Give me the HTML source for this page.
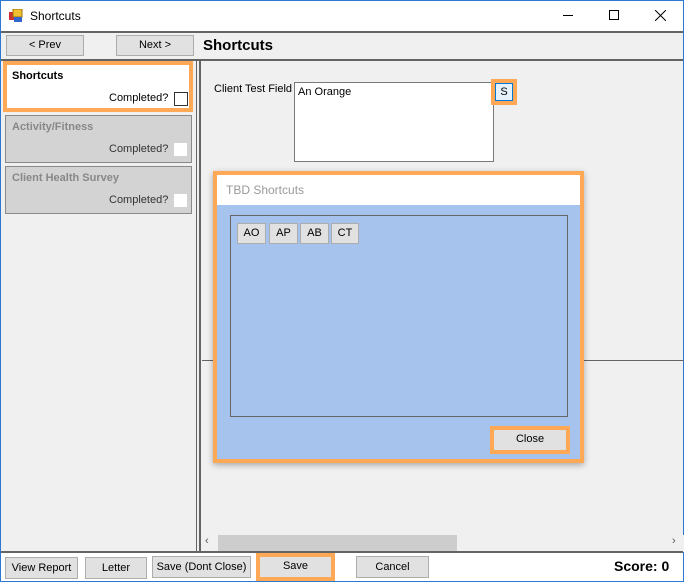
<!DOCTYPE html>
<html><head><style>
*{box-sizing:border-box;margin:0;padding:0}
html,body{width:684px;height:582px;overflow:hidden}
body{background:#f0f0f0;font-family:"Liberation Sans",sans-serif;font-size:11px;color:#000;position:relative;white-space:nowrap}
div,span{position:absolute}
.btn{background:#e1e1e1;border:1px solid #adadad;text-align:center;font-size:11px}
.org{border:4px solid #ffa856}
</style></head><body>
<div style="left:0;top:0;width:684px;height:582px;border:1px solid #2b79d0"></div>
<div style="left:1px;top:1px;width:682px;height:30px;background:#fff"></div>
<svg style="position:absolute;left:9px;top:9px" width="14" height="14"><rect x="0" y="3" width="5" height="8" fill="#c33"/><rect x="4" y="0" width="9" height="8" fill="#f0c030" stroke="#a07000"/><rect x="5" y="8" width="8" height="5" fill="#36c"/></svg>
<span style="left:30px;top:9px;font-size:12px">Shortcuts</span>
<div style="left:563px;top:15px;width:10px;height:1px;background:#000"></div>
<div style="left:609px;top:10px;width:10px;height:10px;border:1px solid #000"></div>
<svg style="position:absolute;left:655px;top:10px" width="11" height="11"><path d="M0 0L11 11M11 0L0 11" stroke="#000"/></svg>
<div style="left:1px;top:31px;width:682px;height:2px;background:#646464"></div>
<div class="btn" style="left:6px;top:35px;width:78px;height:21px;line-height:19px">&lt; Prev</div>
<div class="btn" style="left:116px;top:35px;width:78px;height:21px;line-height:19px">Next &gt;</div>
<span style="left:203px;top:37px;font-size:15px;font-weight:bold">Shortcuts</span>
<div style="left:1px;top:59px;width:682px;height:2px;background:#646464"></div>
<div style="left:196px;top:61px;width:1px;height:491px;background:#646464"></div>
<div style="left:199px;top:61px;width:2px;height:491px;background:#646464"></div>
<div class="org" style="left:3px;top:61px;width:190px;height:51px;background:#fff"></div>
<span style="left:12px;top:70px;font-weight:bold">Shortcuts</span>
<span style="left:109px;top:92px">Completed?</span>
<div style="left:174px;top:92px;width:14px;height:14px;border:1px solid #333;background:#fff"></div>
<div style="left:5px;top:115px;width:187px;height:48px;background:#d3d3d3;border:1px solid #8a8a8a"></div>
<span style="left:12px;top:121px;font-weight:bold;color:#888">Activity/Fitness</span>
<span style="left:109px;top:143px;color:#333">Completed?</span>
<div style="left:174px;top:143px;width:13px;height:13px;background:#fff"></div>
<div style="left:5px;top:166px;width:187px;height:48px;background:#d3d3d3;border:1px solid #8a8a8a"></div>
<span style="left:12px;top:172px;font-weight:bold;color:#888">Client Health Survey</span>
<span style="left:109px;top:194px;color:#333">Completed?</span>
<div style="left:174px;top:194px;width:13px;height:13px;background:#fff"></div>
<div style="left:202px;top:360px;width:482px;height:1px;background:#646464"></div>
<span style="left:214px;top:83px">Client Test Field</span>
<div style="left:294px;top:82px;width:200px;height:80px;background:#fff;border:1px solid #7a7a7a"></div>
<span style="left:298px;top:86px">An Orange</span>
<div class="org" style="left:491px;top:79px;width:26px;height:26px;background:#f0f0f0"></div>
<div style="left:495px;top:83px;width:18px;height:18px;border:1px solid #0078d7;background:#e5f1fb;text-align:center;line-height:16px">S</div>
<div class="org" style="left:213px;top:171px;width:371px;height:292px;background:#a5c3ed;box-shadow:0 2px 6px rgba(0,0,0,.3)"></div>
<div style="left:217px;top:175px;width:363px;height:30px;background:#fff"></div>
<span style="left:226px;top:183px;color:#999;font-size:12px">TBD Shortcuts</span>
<div style="left:230px;top:215px;width:338px;height:202px;border:1px solid #666"></div>
<div class="btn" style="left:237px;top:223px;width:29px;height:21px;line-height:19px">AO</div>
<div class="btn" style="left:269px;top:223px;width:29px;height:21px;line-height:19px">AP</div>
<div class="btn" style="left:300px;top:223px;width:29px;height:21px;line-height:19px">AB</div>
<div class="btn" style="left:331px;top:223px;width:28px;height:21px;line-height:19px">CT</div>
<div class="org" style="left:490px;top:426px;width:80px;height:28px;background:#e1e1e1"></div>
<span style="left:494px;top:433px;width:72px;text-align:center">Close</span>
<div style="left:201px;top:535px;width:483px;height:17px;background:#f0f0f0"></div>
<div style="left:218px;top:535px;width:239px;height:16px;background:#cdcdcd"></div>
<span style="left:205px;top:535px;color:#555">&#8249;</span>
<span style="left:672px;top:535px;color:#555">&#8250;</span>
<div style="left:1px;top:551px;width:682px;height:2px;background:#646464"></div>
<div style="left:1px;top:553px;width:682px;height:28px;background:#fff"></div>
<div class="btn" style="left:5px;top:557px;width:73px;height:22px;line-height:20px">View Report</div>
<div class="btn" style="left:85px;top:557px;width:62px;height:22px;line-height:20px">Letter</div>
<div class="btn" style="left:152px;top:556px;width:99px;height:22px;line-height:20px">Save (Dont Close)</div>
<div class="org" style="left:256px;top:553px;width:79px;height:28px;background:#e1e1e1"></div>
<span style="left:260px;top:560px;width:71px;text-align:center">Save</span>
<div class="btn" style="left:356px;top:556px;width:73px;height:22px;line-height:20px">Cancel</div>
<span style="left:614px;top:558px;font-size:14px;font-weight:bold">Score: 0</span>
</body></html>
